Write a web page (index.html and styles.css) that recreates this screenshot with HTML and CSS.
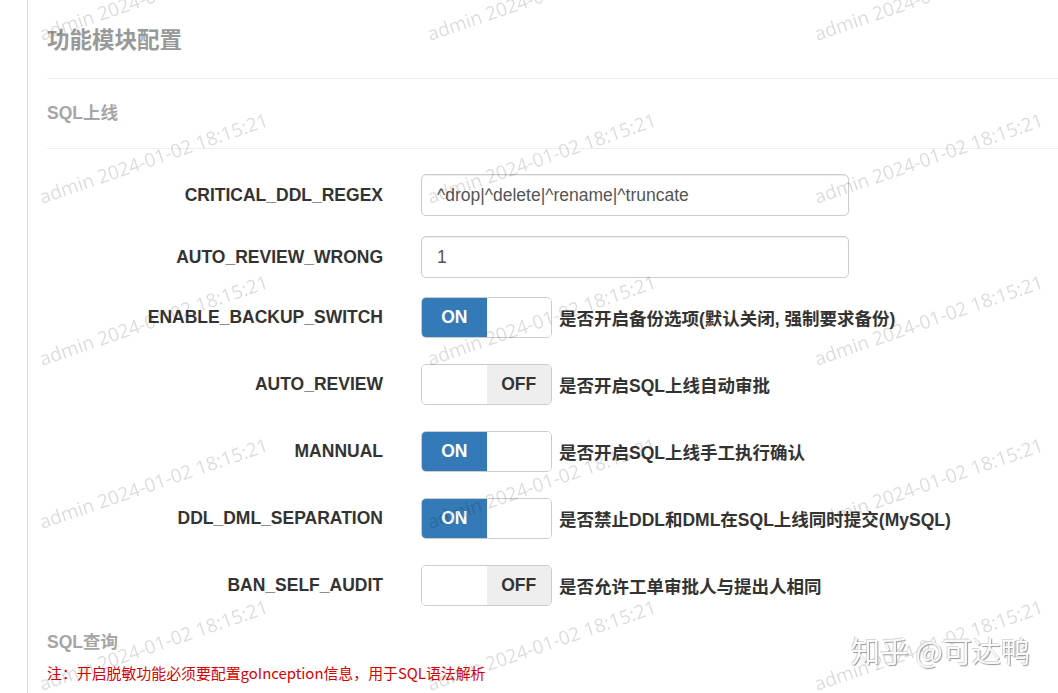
FILE: index.html
```html
<!DOCTYPE html>
<html lang="zh-CN">
<head>
    <meta charset="UTF-8">
    <meta name="viewport" content="width=device-width, initial-scale=1.0">
    <title>功能模块配置</title>
    <link rel="stylesheet" href="styles.css">
</head>
<body>
    <div class="panel">
        <h3 class="page-title">功能模块配置</h3>
        <hr>
        <h5 class="section-title">SQL上线</h5>
        <hr>

        <div class="form-group">
            <label class="form-label">CRITICAL_DDL_REGEX</label>
            <input class="form-control" type="text" value="^drop|^delete|^rename|^truncate">
        </div>
        <div class="form-group">
            <label class="form-label">AUTO_REVIEW_WRONG</label>
            <input class="form-control" type="text" value="1">
        </div>
        <div class="form-group switch-row">
            <label class="form-label">ENABLE_BACKUP_SWITCH</label>
            <div class="switch on"><span class="switch-on">ON</span><span class="switch-label"></span></div>
            <span class="help">是否开启备份选项(默认关闭, 强制要求备份)</span>
        </div>
        <div class="form-group switch-row">
            <label class="form-label">AUTO_REVIEW</label>
            <div class="switch off"><span class="switch-label"></span><span class="switch-off">OFF</span></div>
            <span class="help">是否开启SQL上线自动审批</span>
        </div>
        <div class="form-group switch-row">
            <label class="form-label">MANNUAL</label>
            <div class="switch on"><span class="switch-on">ON</span><span class="switch-label"></span></div>
            <span class="help">是否开启SQL上线手工执行确认</span>
        </div>
        <div class="form-group switch-row">
            <label class="form-label">DDL_DML_SEPARATION</label>
            <div class="switch on"><span class="switch-on">ON</span><span class="switch-label"></span></div>
            <span class="help">是否禁止DDL和DML在SQL上线同时提交(MySQL)</span>
        </div>
        <div class="form-group switch-row">
            <label class="form-label">BAN_SELF_AUDIT</label>
            <div class="switch off"><span class="switch-label"></span><span class="switch-off">OFF</span></div>
            <span class="help">是否允许工单审批人与提出人相同</span>
        </div>

        <h5 class="section-title query-title">SQL查询</h5>
        <p class="note">注：开启脱敏功能必须要配置goInception信息，用于SQL语法解析</p>
    </div>

    <!-- watermark layer -->
    <div class="watermark">
        <span>admin 2024-01-02 18:15:21</span><span>admin 2024-01-02 18:15:21</span><span>admin 2024-01-02 18:15:21</span>
        <span>admin 2024-01-02 18:15:21</span><span>admin 2024-01-02 18:15:21</span><span>admin 2024-01-02 18:15:21</span>
        <span>admin 2024-01-02 18:15:21</span><span>admin 2024-01-02 18:15:21</span><span>admin 2024-01-02 18:15:21</span>
        <span>admin 2024-01-02 18:15:21</span><span>admin 2024-01-02 18:15:21</span><span>admin 2024-01-02 18:15:21</span>
        <span>admin 2024-01-02 18:15:21</span><span>admin 2024-01-02 18:15:21</span><span>admin 2024-01-02 18:15:21</span>
    </div>
    <div class="zhihu-mark">知乎 @可达鸭</div>
</body>
</html>
```

FILE: styles.css
```css
html, body {
    margin: 0;
    height: 100%;
    overflow: hidden;
}
body {
    font-family: "Liberation Sans", Arial, "Noto Sans CJK SC", sans-serif;
    font-size: 17.5px;
    color: #333;
    background-color: #fff;
}
.panel {
    margin-left: 27px;
    border-left: 1px solid #ddd;
    padding-left: 19px;
    min-height: 100%;
    box-sizing: border-box;
}
.page-title {
    margin: 0;
    padding-top: 28px;
    font-size: 22.5px;
    line-height: 25px;
    font-weight: bold;
    color: #999;
}
hr {
    border: 0;
    border-top: 1px solid #eee;
    margin: 25px 0 0;
}
.section-title {
    margin: 24px 0 0;
    font-size: 17.5px;
    line-height: 20px;
    font-weight: bold;
    color: #a6a6a6;
}
.section-title + hr {
    margin-top: 25px;
    margin-bottom: 25px;
}
.form-group {
    display: flex;
    align-items: center;
    height: 42px;
    margin-bottom: 20px;
}
.switch-row {
    height: 41px;
    margin-bottom: 26px;
}
.form-group:nth-of-type(2) {
    margin-bottom: 19px;
}
.form-label {
    width: 336px;
    flex-shrink: 0;
    text-align: right;
    font-weight: bold;
    color: #333;
    margin-right: 38px;
}
.form-control {
    width: 428px;
    height: 42px;
    box-sizing: border-box;
    border: 1px solid #ccc;
    border-radius: 5px;
    padding: 0 15px;
    font-family: "Liberation Sans", Arial, sans-serif;
    font-size: 17.5px;
    color: #555;
    box-shadow: inset 0 1px 1px rgba(0, 0, 0, 0.075);
}
.switch {
    display: flex;
    width: 131px;
    height: 41px;
    box-sizing: border-box;
    border: 1px solid #ccc;
    border-radius: 5px;
    overflow: hidden;
    flex-shrink: 0;
}
.switch span {
    flex: 1;
    display: flex;
    align-items: center;
    justify-content: center;
    font-weight: bold;
    font-size: 17.5px;
}
.switch-on {
    background-color: #337ab7;
    color: #fff;
}
.switch-off {
    background-color: #eee;
    color: #333;
}
.switch-label {
    background-color: #fff;
}
.help {
    margin-left: 7px;
    font-weight: bold;
    color: #333;
    white-space: nowrap;
}
.query-title {
    margin-top: 24px;
}
.note {
    margin: 11px 0 0;
    font-family: "Noto Sans CJK SC", sans-serif;
    font-size: 14.9px;
    line-height: 20px;
    color: #d80000;
}
.watermark {
    position: fixed;
    top: 0;
    left: 0;
    right: 0;
    bottom: 0;
    pointer-events: none;
    display: grid;
    grid-template-columns: repeat(3, 387.5px);
    grid-auto-rows: 162.5px;
    padding: 24px 0 0 42px;
    overflow: hidden;
}
.watermark span {
    display: block;
    font-family: "Open Sans", sans-serif;
    font-size: 19px;
    line-height: 20px;
    color: rgba(0, 0, 0, 0.14);
    white-space: nowrap;
    transform-origin: 0 16px;
    transform: rotate(-19deg);
}
.zhihu-mark {
    position: fixed;
    right: 28px;
    bottom: 26px;
    font-family: "Noto Sans CJK SC", sans-serif;
    font-size: 29px;
    line-height: 34px;
    color: #fafafa;
    text-shadow: 1px 1px 1px #9a9a9a, -1px -1px 0 #d8d8d8;
    pointer-events: none;
}
```
